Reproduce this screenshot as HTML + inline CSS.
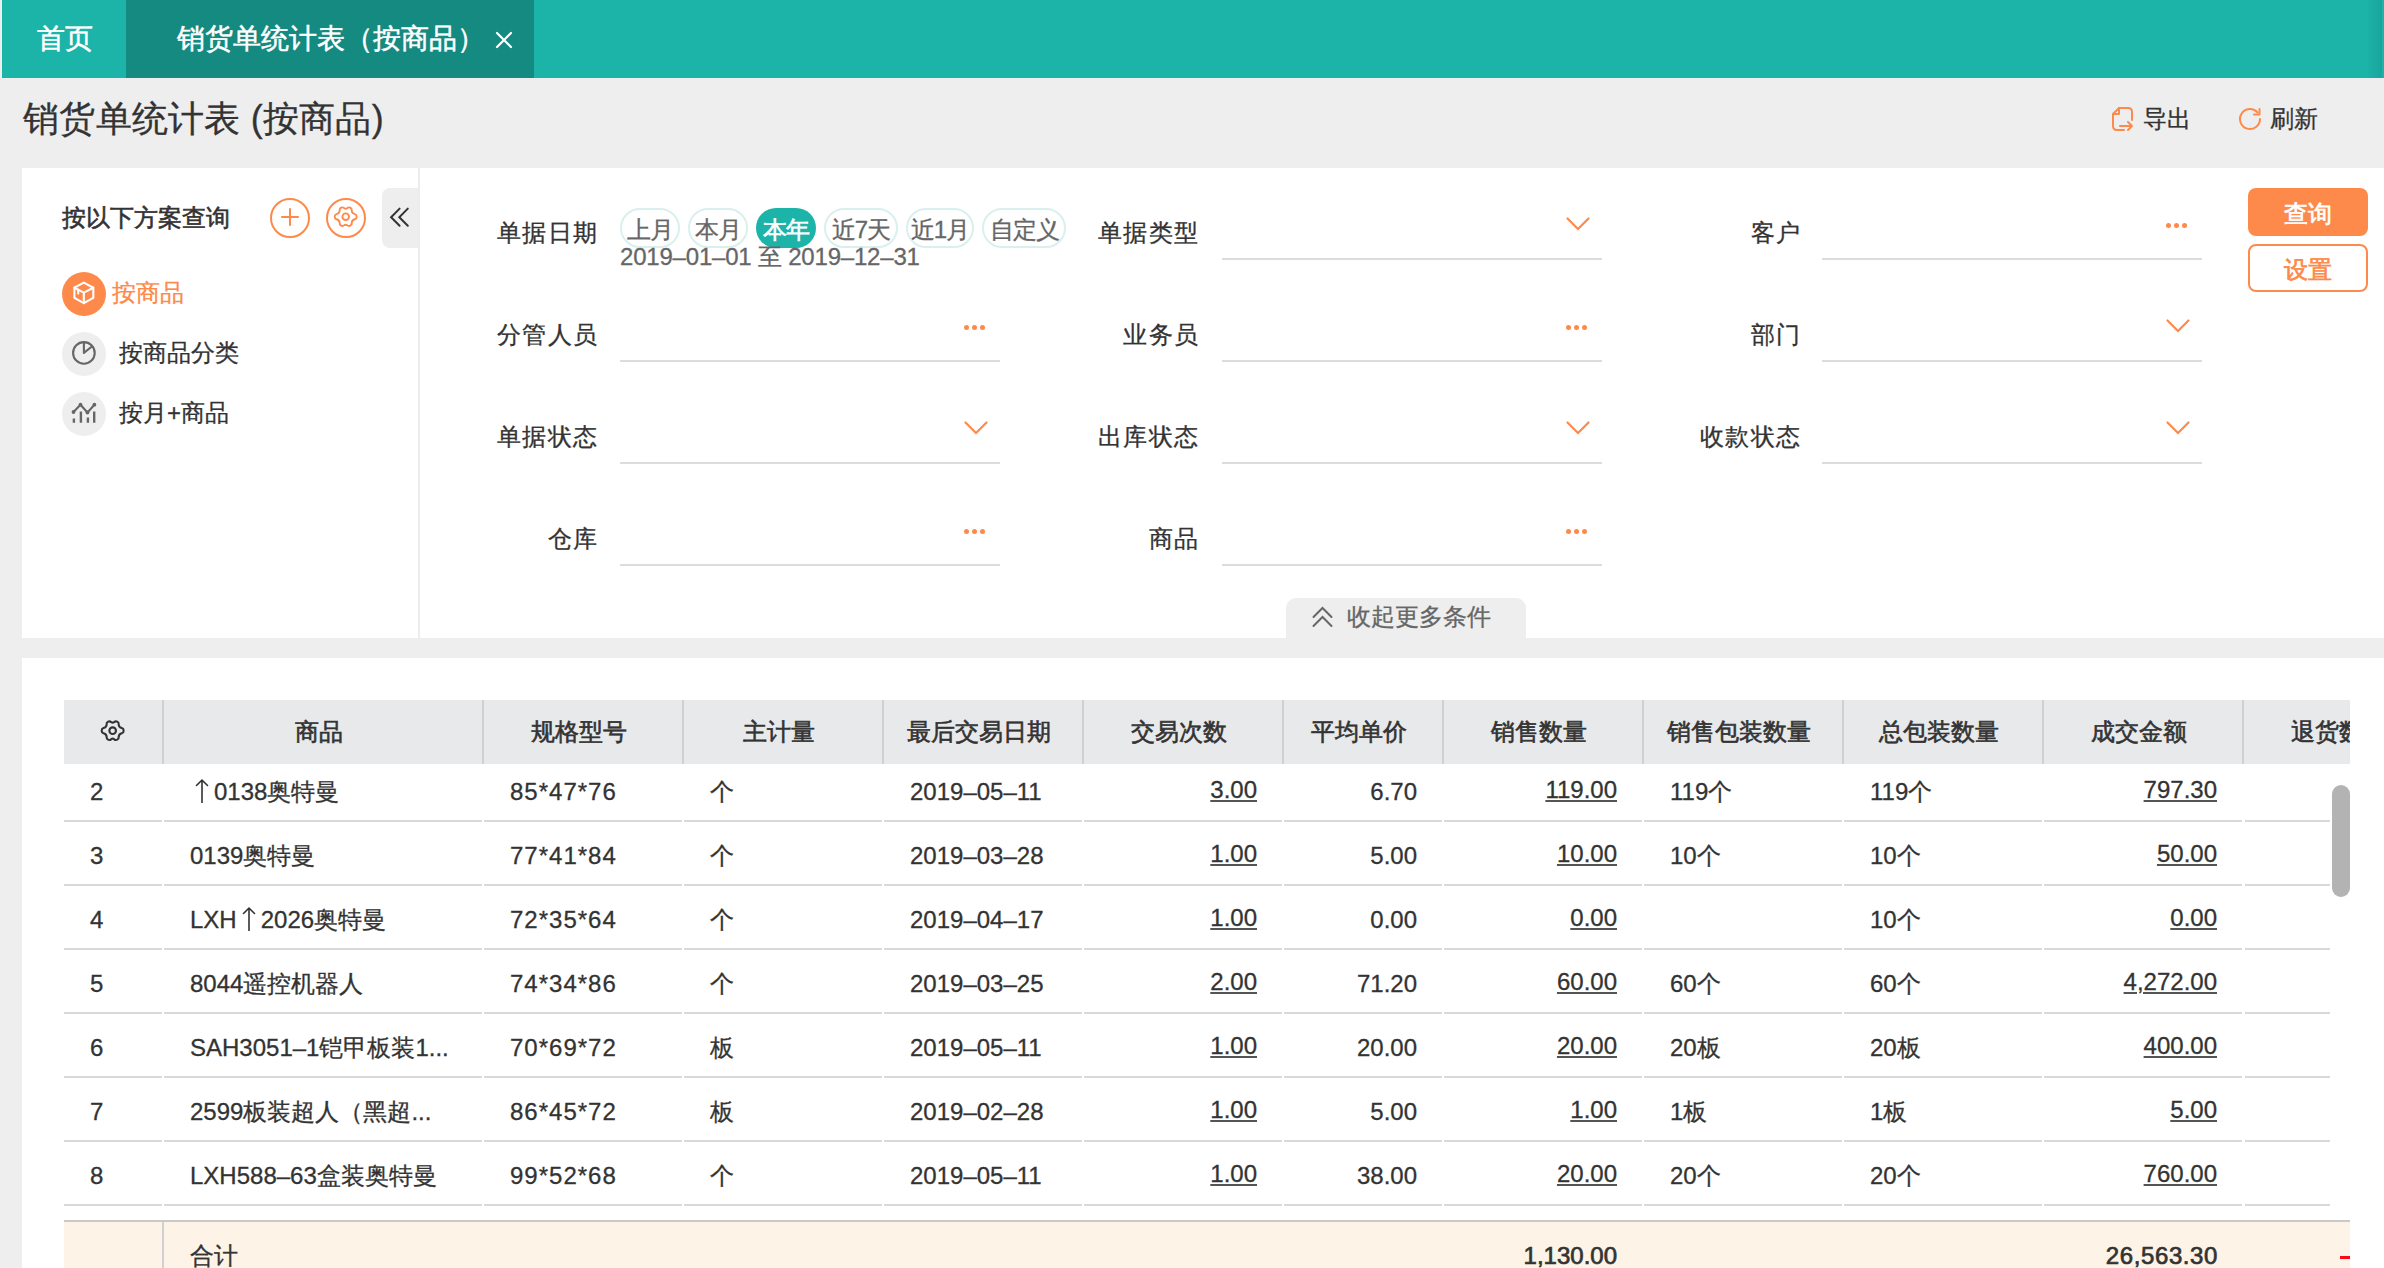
<!DOCTYPE html>
<html><head><meta charset="utf-8">
<style>
*{box-sizing:border-box;margin:0;padding:0}
html,body{width:2384px;height:1268px;overflow:hidden;background:#eeeeee;font-family:"Liberation Sans",sans-serif;color:#333}
.a{position:absolute;white-space:nowrap;-webkit-text-stroke:0.3px currentColor}
svg.a{overflow:visible}
u{text-decoration:underline;text-decoration-thickness:2px;text-underline-offset:2px;text-decoration-color:#555}
</style></head>
<body>

<div class="a" style="left:2px;top:0px;width:2382px;height:78px;background:#1cb3a8;"></div>
<div class="a" style="left:126px;top:0px;width:408px;height:78px;background:#158a81;"></div>
<div class="a" style="left:2366px;top:0px;width:16px;height:78px;background:linear-gradient(to right, rgba(0,0,0,0), rgba(0,0,0,0.08));"></div>
<div class="a" style="left:37px;top:19.0px;font-size:28px;line-height:40px;color:#fff;-webkit-text-stroke:0.5px #fff;">首页</div>
<div class="a" style="left:177px;top:19.0px;font-size:28px;line-height:40px;color:#fff;-webkit-text-stroke:0.5px #fff;">销货单统计表（按商品）</div>
<svg class="a" style="left:496px;top:32px" width="16" height="16" viewBox="0 0 16 16"><path d="M1 1L15 15M15 1L1 15" stroke="#fff" stroke-width="2.2" stroke-linecap="round"/></svg>
<div class="a" style="left:23px;top:96.0px;font-size:36px;line-height:46px;color:#333;letter-spacing:0.25px;">销货单统计表 (按商品)</div>
<svg class="a" style="left:2112px;top:107px" width="22" height="24" viewBox="0 0 22 24" fill="none" stroke="#fd8a4a" stroke-width="2" stroke-linejoin="round" stroke-linecap="round"><path d="M12 23H5Q1 23 1 19V7L7 1H16Q20 1 20 5V13"/><path d="M1 7H7V1"/><path d="M8 19H20M16 15L20 19L16 23"/></svg>
<div class="a" style="left:2143px;top:103.0px;font-size:24px;line-height:32px;color:#333;">导出</div>
<svg class="a" style="left:2238px;top:107px" width="24" height="24" viewBox="0 0 24 24" fill="none" stroke="#fd8a4a" stroke-width="2" stroke-linecap="round" stroke-linejoin="round"><path d="M22 12A10 10 0 1 1 19.5 5.4"/><path d="M21.5 2V7.5H16"/></svg>
<div class="a" style="left:2270px;top:103.0px;font-size:24px;line-height:32px;color:#333;">刷新</div>
<div class="a" style="left:22px;top:168px;width:2362px;height:470px;background:#fff;"></div>
<div class="a" style="left:418px;top:168px;width:2px;height:470px;background:#ececec;"></div>
<div class="a" style="left:62px;top:202.0px;font-size:24px;line-height:32px;color:#333;-webkit-text-stroke:0.6px #333;">按以下方案查询</div>
<svg class="a" style="left:270px;top:198px" width="40" height="40" viewBox="0 0 40 40" fill="none" stroke="#fd8a4a" stroke-width="2"><circle cx="20" cy="20" r="19"/><path d="M11.2 19H28.8M20 10.2V27.8"/></svg>
<svg class="a" style="left:326px;top:198px" width="40" height="40" viewBox="0 0 40 40" fill="none" stroke="#fd8a4a" stroke-width="2"><circle cx="20" cy="20" r="19"/><path d="M28.83 21.27A2.7 2.7 0 0 0 28.83 16.13A4.0 4.0 0 0 1 25.73 12.53A2.7 2.7 0 0 0 21.15 10.20A2.6 2.6 0 0 1 18.25 10.20A2.7 2.7 0 0 0 13.67 12.53A4.0 4.0 0 0 1 10.57 16.13A2.7 2.7 0 0 0 10.57 21.27A4.0 4.0 0 0 1 13.67 24.87A2.7 2.7 0 0 0 18.25 27.20A2.6 2.6 0 0 1 21.15 27.20A2.7 2.7 0 0 0 25.73 24.87A4.0 4.0 0 0 1 28.83 21.27Z" stroke-width="1.9" stroke-linejoin="round"/><circle cx="19.7" cy="18.7" r="3.3" stroke-width="1.9"/></svg>
<div class="a" style="left:382px;top:188px;width:36px;height:60px;background:#eeeeee;border-radius:8px 0 0 8px"></div>
<svg class="a" style="left:389px;top:206px" width="22" height="22" viewBox="0 0 22 22" fill="none" stroke="#333" stroke-width="2" stroke-linecap="round"><path d="M10.6 2.6L2.1 11.2L10.6 19.8M18.8 2.6L10.3 11.2L18.8 19.8"/></svg>
<div class="a" style="left:62px;top:272px;width:44px;height:44px;border-radius:50%;background:#fd8a4a"></div>
<svg class="a" style="left:72px;top:280px" width="24" height="26" viewBox="0 0 24 26" fill="none" stroke="#fff" stroke-width="2.1" stroke-linejoin="round" stroke-linecap="round"><path d="M11.8 2.6L21.3 7.7V17.9L11.8 23.2L2.4 17.9V7.7Z"/><path d="M2.4 7.7L11.8 12.6L21.3 7.7M11.8 12.6V23.2"/><path d="M6.2 9.9V13.6"/></svg>
<div class="a" style="left:112px;top:277.0px;font-size:24px;line-height:32px;color:#fd8a4a;">按商品</div>
<div class="a" style="left:62px;top:332px;width:44px;height:44px;border-radius:50%;background:#eeeeee"></div>
<svg class="a" style="left:62px;top:332px" width="44" height="44" viewBox="0 0 44 44" fill="none" stroke="#666" stroke-width="2.1" stroke-linejoin="round"><circle cx="21.9" cy="20.9" r="10.8"/><path d="M21.9 10.1V20.9L30.2 14.2"/></svg>
<div class="a" style="left:119px;top:337.0px;font-size:24px;line-height:32px;color:#333;">按商品分类</div>
<div class="a" style="left:62px;top:392px;width:44px;height:44px;border-radius:50%;background:#eeeeee"></div>
<svg class="a" style="left:62px;top:392px" width="44" height="44" viewBox="0 0 44 44" fill="none" stroke="#666" stroke-width="2.1" stroke-linejoin="round"><path d="M11.5 20L18.5 12.7L25.45 20.5L32.4 12.7"/><g fill="#666" stroke="none"><circle cx="11.5" cy="20" r="1.9"/><circle cx="18.5" cy="12.7" r="1.9"/><circle cx="25.45" cy="20.5" r="1.9"/><circle cx="32.4" cy="12.7" r="1.9"/></g><path d="M11.9 26.6V30.7M18.9 19.6V30.7M25.9 25.4V30.7M32.2 19.6V30.7" stroke-width="2.4"/></svg>
<div class="a" style="left:119px;top:397.0px;font-size:24px;line-height:32px;color:#333;">按月+商品</div>
<div class="a" style="left:-1.7000000000000455px;top:217.0px;font-size:24px;line-height:32px;color:#333;width:600px;text-align:right;letter-spacing:1.3px;">单据日期</div>
<div class="a" style="left:599.3px;top:217.0px;font-size:24px;line-height:32px;color:#333;width:600px;text-align:right;letter-spacing:1.3px;">单据类型</div>
<div class="a" style="left:1222px;top:258px;width:380px;height:2px;background:#dcdcdc;"></div>
<svg class="a" style="left:1566px;top:217px" width="26" height="14" viewBox="0 0 26 14" fill="none" stroke="#fd8a4a" stroke-width="2.2" stroke-linecap="round"><path d="M1.5 1.5L12 12L22.5 1.5"/></svg>
<div class="a" style="left:1201.3px;top:217.0px;font-size:24px;line-height:32px;color:#333;width:600px;text-align:right;letter-spacing:1.3px;">客户</div>
<div class="a" style="left:1822px;top:258px;width:380px;height:2px;background:#dcdcdc;"></div>
<div class="a" style="left:2165.5px;top:222.5px;width:5px;height:5px;border-radius:50%;background:#fd8a4a"></div>
<div class="a" style="left:2173.5px;top:222.5px;width:5px;height:5px;border-radius:50%;background:#fd8a4a"></div>
<div class="a" style="left:2181.5px;top:222.5px;width:5px;height:5px;border-radius:50%;background:#fd8a4a"></div>
<div class="a" style="left:-1.7000000000000455px;top:319.0px;font-size:24px;line-height:32px;color:#333;width:600px;text-align:right;letter-spacing:1.3px;">分管人员</div>
<div class="a" style="left:620px;top:360px;width:380px;height:2px;background:#dcdcdc;"></div>
<div class="a" style="left:963.5px;top:324.5px;width:5px;height:5px;border-radius:50%;background:#fd8a4a"></div>
<div class="a" style="left:971.5px;top:324.5px;width:5px;height:5px;border-radius:50%;background:#fd8a4a"></div>
<div class="a" style="left:979.5px;top:324.5px;width:5px;height:5px;border-radius:50%;background:#fd8a4a"></div>
<div class="a" style="left:599.3px;top:319.0px;font-size:24px;line-height:32px;color:#333;width:600px;text-align:right;letter-spacing:1.3px;">业务员</div>
<div class="a" style="left:1222px;top:360px;width:380px;height:2px;background:#dcdcdc;"></div>
<div class="a" style="left:1565.5px;top:324.5px;width:5px;height:5px;border-radius:50%;background:#fd8a4a"></div>
<div class="a" style="left:1573.5px;top:324.5px;width:5px;height:5px;border-radius:50%;background:#fd8a4a"></div>
<div class="a" style="left:1581.5px;top:324.5px;width:5px;height:5px;border-radius:50%;background:#fd8a4a"></div>
<div class="a" style="left:1201.3px;top:319.0px;font-size:24px;line-height:32px;color:#333;width:600px;text-align:right;letter-spacing:1.3px;">部门</div>
<div class="a" style="left:1822px;top:360px;width:380px;height:2px;background:#dcdcdc;"></div>
<svg class="a" style="left:2166px;top:319px" width="26" height="14" viewBox="0 0 26 14" fill="none" stroke="#fd8a4a" stroke-width="2.2" stroke-linecap="round"><path d="M1.5 1.5L12 12L22.5 1.5"/></svg>
<div class="a" style="left:-1.7000000000000455px;top:421.0px;font-size:24px;line-height:32px;color:#333;width:600px;text-align:right;letter-spacing:1.3px;">单据状态</div>
<div class="a" style="left:620px;top:462px;width:380px;height:2px;background:#dcdcdc;"></div>
<svg class="a" style="left:964px;top:421px" width="26" height="14" viewBox="0 0 26 14" fill="none" stroke="#fd8a4a" stroke-width="2.2" stroke-linecap="round"><path d="M1.5 1.5L12 12L22.5 1.5"/></svg>
<div class="a" style="left:599.3px;top:421.0px;font-size:24px;line-height:32px;color:#333;width:600px;text-align:right;letter-spacing:1.3px;">出库状态</div>
<div class="a" style="left:1222px;top:462px;width:380px;height:2px;background:#dcdcdc;"></div>
<svg class="a" style="left:1566px;top:421px" width="26" height="14" viewBox="0 0 26 14" fill="none" stroke="#fd8a4a" stroke-width="2.2" stroke-linecap="round"><path d="M1.5 1.5L12 12L22.5 1.5"/></svg>
<div class="a" style="left:1201.3px;top:421.0px;font-size:24px;line-height:32px;color:#333;width:600px;text-align:right;letter-spacing:1.3px;">收款状态</div>
<div class="a" style="left:1822px;top:462px;width:380px;height:2px;background:#dcdcdc;"></div>
<svg class="a" style="left:2166px;top:421px" width="26" height="14" viewBox="0 0 26 14" fill="none" stroke="#fd8a4a" stroke-width="2.2" stroke-linecap="round"><path d="M1.5 1.5L12 12L22.5 1.5"/></svg>
<div class="a" style="left:-1.7000000000000455px;top:523.0px;font-size:24px;line-height:32px;color:#333;width:600px;text-align:right;letter-spacing:1.3px;">仓库</div>
<div class="a" style="left:620px;top:564px;width:380px;height:2px;background:#dcdcdc;"></div>
<div class="a" style="left:963.5px;top:528.5px;width:5px;height:5px;border-radius:50%;background:#fd8a4a"></div>
<div class="a" style="left:971.5px;top:528.5px;width:5px;height:5px;border-radius:50%;background:#fd8a4a"></div>
<div class="a" style="left:979.5px;top:528.5px;width:5px;height:5px;border-radius:50%;background:#fd8a4a"></div>
<div class="a" style="left:599.3px;top:523.0px;font-size:24px;line-height:32px;color:#333;width:600px;text-align:right;letter-spacing:1.3px;">商品</div>
<div class="a" style="left:1222px;top:564px;width:380px;height:2px;background:#dcdcdc;"></div>
<div class="a" style="left:1565.5px;top:528.5px;width:5px;height:5px;border-radius:50%;background:#fd8a4a"></div>
<div class="a" style="left:1573.5px;top:528.5px;width:5px;height:5px;border-radius:50%;background:#fd8a4a"></div>
<div class="a" style="left:1581.5px;top:528.5px;width:5px;height:5px;border-radius:50%;background:#fd8a4a"></div>
<div class="a" style="left:620px;top:208px;width:60px;height:40px;border-radius:20px;border:2px solid #d9f0ee;color:#666;font-size:24px;line-height:39px;text-align:center;letter-spacing:-1px">上月</div>
<div class="a" style="left:688px;top:208px;width:60px;height:40px;border-radius:20px;border:2px solid #d9f0ee;color:#666;font-size:24px;line-height:39px;text-align:center;letter-spacing:-1px">本月</div>
<div class="a" style="left:756px;top:208px;width:60px;height:40px;border-radius:20px;background:#1cb3a8;color:#fff;-webkit-text-stroke:0.6px #fff;font-size:24px;line-height:43px;text-align:center;letter-spacing:-1px">本年</div>
<div class="a" style="left:824px;top:208px;width:74px;height:40px;border-radius:20px;border:2px solid #d9f0ee;color:#666;font-size:24px;line-height:39px;text-align:center;letter-spacing:-1px">近7天</div>
<div class="a" style="left:906px;top:208px;width:68px;height:40px;border-radius:20px;border:2px solid #d9f0ee;color:#666;font-size:24px;line-height:39px;text-align:center;letter-spacing:-1px">近1月</div>
<div class="a" style="left:982px;top:208px;width:84px;height:40px;border-radius:20px;border:2px solid #d9f0ee;color:#666;font-size:24px;line-height:39px;text-align:center;letter-spacing:-1px">自定义</div>
<div class="a" style="left:620px;top:242.0px;font-size:24px;line-height:30px;color:#666;letter-spacing:-0.2px;">2019–01–01 至 2019–12–31</div>
<div class="a" style="left:2248px;top:188px;width:120px;height:48px;border-radius:8px;background:#fd8a4a;color:#fff;font-size:24px;-webkit-text-stroke:0.7px #fff;line-height:51px;text-align:center">查询</div>
<div class="a" style="left:2248px;top:244px;width:120px;height:48px;border-radius:8px;border:2px solid #fd8a4a;color:#fd8a4a;font-size:24px;-webkit-text-stroke:0.7px #fd8a4a;line-height:47px;text-align:center">设置</div>
<div class="a" style="left:1286px;top:598px;width:240px;height:41px;background:#eeeeee;border-radius:10px 10px 0 0"></div>
<svg class="a" style="left:1312px;top:607px" width="21" height="21" viewBox="0 0 21 21" fill="none" stroke="#666" stroke-width="2" stroke-linecap="round"><path d="M1.5 10L10.5 1L19.5 10M1.5 19L10.5 10L19.5 19"/></svg>
<div class="a" style="left:1347px;top:601.0px;font-size:24px;line-height:32px;color:#666;">收起更多条件</div>
<div class="a" style="left:22px;top:658px;width:2362px;height:610px;background:#fff;"></div>
<div class="a" style="left:64px;top:700px;width:2286px;height:64px;background:#e8e9eb;"></div>
<div class="a" style="left:162px;top:700px;width:2px;height:64px;background:#cfd0d2;"></div>
<div class="a" style="left:482px;top:700px;width:2px;height:64px;background:#cfd0d2;"></div>
<div class="a" style="left:682px;top:700px;width:2px;height:64px;background:#cfd0d2;"></div>
<div class="a" style="left:882px;top:700px;width:2px;height:64px;background:#cfd0d2;"></div>
<div class="a" style="left:1082px;top:700px;width:2px;height:64px;background:#cfd0d2;"></div>
<div class="a" style="left:1282px;top:700px;width:2px;height:64px;background:#cfd0d2;"></div>
<div class="a" style="left:1442px;top:700px;width:2px;height:64px;background:#cfd0d2;"></div>
<div class="a" style="left:1642px;top:700px;width:2px;height:64px;background:#cfd0d2;"></div>
<div class="a" style="left:1842px;top:700px;width:2px;height:64px;background:#cfd0d2;"></div>
<div class="a" style="left:2042px;top:700px;width:2px;height:64px;background:#cfd0d2;"></div>
<div class="a" style="left:2242px;top:700px;width:2px;height:64px;background:#cfd0d2;"></div>
<svg class="a" style="left:97px;top:715px" width="32" height="32" viewBox="0 0 32 32" fill="none" stroke="#333" stroke-width="2.1" stroke-linejoin="round"><path d="M24.79 18.23A2.7 2.7 0 0 0 24.79 13.09A4.0 4.0 0 0 1 21.69 9.49A2.7 2.7 0 0 0 17.11 7.16A2.6 2.6 0 0 1 14.21 7.16A2.7 2.7 0 0 0 9.63 9.49A4.0 4.0 0 0 1 6.53 13.09A2.7 2.7 0 0 0 6.53 18.23A4.0 4.0 0 0 1 9.63 21.83A2.7 2.7 0 0 0 14.21 24.16A2.6 2.6 0 0 1 17.11 24.16A2.7 2.7 0 0 0 21.69 21.83A4.0 4.0 0 0 1 24.79 18.23Z"/><circle cx="15.66" cy="15.66" r="3.3"/></svg>
<div class="a" style="left:0;top:700px;width:2350px;height:64px;overflow:hidden">
<div class="a" style="left:169.0px;top:16px;width:300px;font-size:24px;line-height:32px;-webkit-text-stroke:0.6px #333;text-align:center;color:#333">商品</div>
<div class="a" style="left:429.0px;top:16px;width:300px;font-size:24px;line-height:32px;-webkit-text-stroke:0.6px #333;text-align:center;color:#333">规格型号</div>
<div class="a" style="left:629.0px;top:16px;width:300px;font-size:24px;line-height:32px;-webkit-text-stroke:0.6px #333;text-align:center;color:#333">主计量</div>
<div class="a" style="left:829.0px;top:16px;width:300px;font-size:24px;line-height:32px;-webkit-text-stroke:0.6px #333;text-align:center;color:#333">最后交易日期</div>
<div class="a" style="left:1029.0px;top:16px;width:300px;font-size:24px;line-height:32px;-webkit-text-stroke:0.6px #333;text-align:center;color:#333">交易次数</div>
<div class="a" style="left:1209.0px;top:16px;width:300px;font-size:24px;line-height:32px;-webkit-text-stroke:0.6px #333;text-align:center;color:#333">平均单价</div>
<div class="a" style="left:1389.0px;top:16px;width:300px;font-size:24px;line-height:32px;-webkit-text-stroke:0.6px #333;text-align:center;color:#333">销售数量</div>
<div class="a" style="left:1589.0px;top:16px;width:300px;font-size:24px;line-height:32px;-webkit-text-stroke:0.6px #333;text-align:center;color:#333">销售包装数量</div>
<div class="a" style="left:1789.0px;top:16px;width:300px;font-size:24px;line-height:32px;-webkit-text-stroke:0.6px #333;text-align:center;color:#333">总包装数量</div>
<div class="a" style="left:1989.0px;top:16px;width:300px;font-size:24px;line-height:32px;-webkit-text-stroke:0.6px #333;text-align:center;color:#333">成交金额</div>
<div class="a" style="left:2189.0px;top:16px;width:300px;font-size:24px;line-height:32px;-webkit-text-stroke:0.6px #333;text-align:center;color:#333">退货数量</div>
</div>
<div class="a" style="left:64px;top:820px;width:98px;height:2px;background:#d9d9d9;"></div>
<div class="a" style="left:164px;top:820px;width:318px;height:2px;background:#d9d9d9;"></div>
<div class="a" style="left:484px;top:820px;width:198px;height:2px;background:#d9d9d9;"></div>
<div class="a" style="left:684px;top:820px;width:198px;height:2px;background:#d9d9d9;"></div>
<div class="a" style="left:884px;top:820px;width:198px;height:2px;background:#d9d9d9;"></div>
<div class="a" style="left:1084px;top:820px;width:198px;height:2px;background:#d9d9d9;"></div>
<div class="a" style="left:1284px;top:820px;width:158px;height:2px;background:#d9d9d9;"></div>
<div class="a" style="left:1444px;top:820px;width:198px;height:2px;background:#d9d9d9;"></div>
<div class="a" style="left:1644px;top:820px;width:198px;height:2px;background:#d9d9d9;"></div>
<div class="a" style="left:1844px;top:820px;width:198px;height:2px;background:#d9d9d9;"></div>
<div class="a" style="left:2044px;top:820px;width:198px;height:2px;background:#d9d9d9;"></div>
<div class="a" style="left:2245px;top:820px;width:85px;height:2px;background:#d9d9d9;"></div>
<div class="a" style="left:90px;top:776.0px;font-size:24px;line-height:32px;color:#333;">2</div>
<div class="a" style="left:190px;top:776.0px;font-size:24px;line-height:32px;color:#333;"><svg width="24" height="24" viewBox="0 0 24 24" style="vertical-align:-3px" fill="none" stroke="#333" stroke-width="1.6" stroke-linecap="round" stroke-linejoin="round"><path d="M12 1V24M6.5 6.5L12 1L17.5 6.5"/></svg>0138奥特曼</div>
<div class="a" style="left:510px;top:776.0px;font-size:24px;line-height:32px;color:#333;letter-spacing:1px;">85*47*76</div>
<div class="a" style="left:710px;top:776.0px;font-size:24px;line-height:32px;color:#333;">个</div>
<div class="a" style="left:910px;top:776.0px;font-size:24px;line-height:32px;color:#333;">2019–05–11</div>
<div class="a" style="left:1670px;top:776.0px;font-size:24px;line-height:32px;color:#333;">119个</div>
<div class="a" style="left:1870px;top:776.0px;font-size:24px;line-height:32px;color:#333;">119个</div>
<div class="a" style="left:657px;top:774.0px;font-size:24px;line-height:32px;color:#333;width:600px;text-align:right;"><u>3.00</u></div>
<div class="a" style="left:1017px;top:774.0px;font-size:24px;line-height:32px;color:#333;width:600px;text-align:right;"><u>119.00</u></div>
<div class="a" style="left:1617px;top:774.0px;font-size:24px;line-height:32px;color:#333;width:600px;text-align:right;"><u>797.30</u></div>
<div class="a" style="left:817px;top:776.0px;font-size:24px;line-height:32px;color:#333;width:600px;text-align:right;">6.70</div>
<div class="a" style="left:64px;top:884px;width:98px;height:2px;background:#d9d9d9;"></div>
<div class="a" style="left:164px;top:884px;width:318px;height:2px;background:#d9d9d9;"></div>
<div class="a" style="left:484px;top:884px;width:198px;height:2px;background:#d9d9d9;"></div>
<div class="a" style="left:684px;top:884px;width:198px;height:2px;background:#d9d9d9;"></div>
<div class="a" style="left:884px;top:884px;width:198px;height:2px;background:#d9d9d9;"></div>
<div class="a" style="left:1084px;top:884px;width:198px;height:2px;background:#d9d9d9;"></div>
<div class="a" style="left:1284px;top:884px;width:158px;height:2px;background:#d9d9d9;"></div>
<div class="a" style="left:1444px;top:884px;width:198px;height:2px;background:#d9d9d9;"></div>
<div class="a" style="left:1644px;top:884px;width:198px;height:2px;background:#d9d9d9;"></div>
<div class="a" style="left:1844px;top:884px;width:198px;height:2px;background:#d9d9d9;"></div>
<div class="a" style="left:2044px;top:884px;width:198px;height:2px;background:#d9d9d9;"></div>
<div class="a" style="left:2245px;top:884px;width:85px;height:2px;background:#d9d9d9;"></div>
<div class="a" style="left:90px;top:840.0px;font-size:24px;line-height:32px;color:#333;">3</div>
<div class="a" style="left:190px;top:840.0px;font-size:24px;line-height:32px;color:#333;">0139奥特曼</div>
<div class="a" style="left:510px;top:840.0px;font-size:24px;line-height:32px;color:#333;letter-spacing:1px;">77*41*84</div>
<div class="a" style="left:710px;top:840.0px;font-size:24px;line-height:32px;color:#333;">个</div>
<div class="a" style="left:910px;top:840.0px;font-size:24px;line-height:32px;color:#333;">2019–03–28</div>
<div class="a" style="left:1670px;top:840.0px;font-size:24px;line-height:32px;color:#333;">10个</div>
<div class="a" style="left:1870px;top:840.0px;font-size:24px;line-height:32px;color:#333;">10个</div>
<div class="a" style="left:657px;top:838.0px;font-size:24px;line-height:32px;color:#333;width:600px;text-align:right;"><u>1.00</u></div>
<div class="a" style="left:1017px;top:838.0px;font-size:24px;line-height:32px;color:#333;width:600px;text-align:right;"><u>10.00</u></div>
<div class="a" style="left:1617px;top:838.0px;font-size:24px;line-height:32px;color:#333;width:600px;text-align:right;"><u>50.00</u></div>
<div class="a" style="left:817px;top:840.0px;font-size:24px;line-height:32px;color:#333;width:600px;text-align:right;">5.00</div>
<div class="a" style="left:64px;top:948px;width:98px;height:2px;background:#d9d9d9;"></div>
<div class="a" style="left:164px;top:948px;width:318px;height:2px;background:#d9d9d9;"></div>
<div class="a" style="left:484px;top:948px;width:198px;height:2px;background:#d9d9d9;"></div>
<div class="a" style="left:684px;top:948px;width:198px;height:2px;background:#d9d9d9;"></div>
<div class="a" style="left:884px;top:948px;width:198px;height:2px;background:#d9d9d9;"></div>
<div class="a" style="left:1084px;top:948px;width:198px;height:2px;background:#d9d9d9;"></div>
<div class="a" style="left:1284px;top:948px;width:158px;height:2px;background:#d9d9d9;"></div>
<div class="a" style="left:1444px;top:948px;width:198px;height:2px;background:#d9d9d9;"></div>
<div class="a" style="left:1644px;top:948px;width:198px;height:2px;background:#d9d9d9;"></div>
<div class="a" style="left:1844px;top:948px;width:198px;height:2px;background:#d9d9d9;"></div>
<div class="a" style="left:2044px;top:948px;width:198px;height:2px;background:#d9d9d9;"></div>
<div class="a" style="left:2245px;top:948px;width:85px;height:2px;background:#d9d9d9;"></div>
<div class="a" style="left:90px;top:904.0px;font-size:24px;line-height:32px;color:#333;">4</div>
<div class="a" style="left:190px;top:904.0px;font-size:24px;line-height:32px;color:#333;">LXH<svg width="24" height="24" viewBox="0 0 24 24" style="vertical-align:-3px" fill="none" stroke="#333" stroke-width="1.6" stroke-linecap="round" stroke-linejoin="round"><path d="M12 1V24M6.5 6.5L12 1L17.5 6.5"/></svg>2026奥特曼</div>
<div class="a" style="left:510px;top:904.0px;font-size:24px;line-height:32px;color:#333;letter-spacing:1px;">72*35*64</div>
<div class="a" style="left:710px;top:904.0px;font-size:24px;line-height:32px;color:#333;">个</div>
<div class="a" style="left:910px;top:904.0px;font-size:24px;line-height:32px;color:#333;">2019–04–17</div>
<div class="a" style="left:1670px;top:904.0px;font-size:24px;line-height:32px;color:#333;"></div>
<div class="a" style="left:1870px;top:904.0px;font-size:24px;line-height:32px;color:#333;">10个</div>
<div class="a" style="left:657px;top:902.0px;font-size:24px;line-height:32px;color:#333;width:600px;text-align:right;"><u>1.00</u></div>
<div class="a" style="left:1017px;top:902.0px;font-size:24px;line-height:32px;color:#333;width:600px;text-align:right;"><u>0.00</u></div>
<div class="a" style="left:1617px;top:902.0px;font-size:24px;line-height:32px;color:#333;width:600px;text-align:right;"><u>0.00</u></div>
<div class="a" style="left:817px;top:904.0px;font-size:24px;line-height:32px;color:#333;width:600px;text-align:right;">0.00</div>
<div class="a" style="left:64px;top:1012px;width:98px;height:2px;background:#d9d9d9;"></div>
<div class="a" style="left:164px;top:1012px;width:318px;height:2px;background:#d9d9d9;"></div>
<div class="a" style="left:484px;top:1012px;width:198px;height:2px;background:#d9d9d9;"></div>
<div class="a" style="left:684px;top:1012px;width:198px;height:2px;background:#d9d9d9;"></div>
<div class="a" style="left:884px;top:1012px;width:198px;height:2px;background:#d9d9d9;"></div>
<div class="a" style="left:1084px;top:1012px;width:198px;height:2px;background:#d9d9d9;"></div>
<div class="a" style="left:1284px;top:1012px;width:158px;height:2px;background:#d9d9d9;"></div>
<div class="a" style="left:1444px;top:1012px;width:198px;height:2px;background:#d9d9d9;"></div>
<div class="a" style="left:1644px;top:1012px;width:198px;height:2px;background:#d9d9d9;"></div>
<div class="a" style="left:1844px;top:1012px;width:198px;height:2px;background:#d9d9d9;"></div>
<div class="a" style="left:2044px;top:1012px;width:198px;height:2px;background:#d9d9d9;"></div>
<div class="a" style="left:2245px;top:1012px;width:85px;height:2px;background:#d9d9d9;"></div>
<div class="a" style="left:90px;top:968.0px;font-size:24px;line-height:32px;color:#333;">5</div>
<div class="a" style="left:190px;top:968.0px;font-size:24px;line-height:32px;color:#333;">8044遥控机器人</div>
<div class="a" style="left:510px;top:968.0px;font-size:24px;line-height:32px;color:#333;letter-spacing:1px;">74*34*86</div>
<div class="a" style="left:710px;top:968.0px;font-size:24px;line-height:32px;color:#333;">个</div>
<div class="a" style="left:910px;top:968.0px;font-size:24px;line-height:32px;color:#333;">2019–03–25</div>
<div class="a" style="left:1670px;top:968.0px;font-size:24px;line-height:32px;color:#333;">60个</div>
<div class="a" style="left:1870px;top:968.0px;font-size:24px;line-height:32px;color:#333;">60个</div>
<div class="a" style="left:657px;top:966.0px;font-size:24px;line-height:32px;color:#333;width:600px;text-align:right;"><u>2.00</u></div>
<div class="a" style="left:1017px;top:966.0px;font-size:24px;line-height:32px;color:#333;width:600px;text-align:right;"><u>60.00</u></div>
<div class="a" style="left:1617px;top:966.0px;font-size:24px;line-height:32px;color:#333;width:600px;text-align:right;"><u>4,272.00</u></div>
<div class="a" style="left:817px;top:968.0px;font-size:24px;line-height:32px;color:#333;width:600px;text-align:right;">71.20</div>
<div class="a" style="left:64px;top:1076px;width:98px;height:2px;background:#d9d9d9;"></div>
<div class="a" style="left:164px;top:1076px;width:318px;height:2px;background:#d9d9d9;"></div>
<div class="a" style="left:484px;top:1076px;width:198px;height:2px;background:#d9d9d9;"></div>
<div class="a" style="left:684px;top:1076px;width:198px;height:2px;background:#d9d9d9;"></div>
<div class="a" style="left:884px;top:1076px;width:198px;height:2px;background:#d9d9d9;"></div>
<div class="a" style="left:1084px;top:1076px;width:198px;height:2px;background:#d9d9d9;"></div>
<div class="a" style="left:1284px;top:1076px;width:158px;height:2px;background:#d9d9d9;"></div>
<div class="a" style="left:1444px;top:1076px;width:198px;height:2px;background:#d9d9d9;"></div>
<div class="a" style="left:1644px;top:1076px;width:198px;height:2px;background:#d9d9d9;"></div>
<div class="a" style="left:1844px;top:1076px;width:198px;height:2px;background:#d9d9d9;"></div>
<div class="a" style="left:2044px;top:1076px;width:198px;height:2px;background:#d9d9d9;"></div>
<div class="a" style="left:2245px;top:1076px;width:85px;height:2px;background:#d9d9d9;"></div>
<div class="a" style="left:90px;top:1032.0px;font-size:24px;line-height:32px;color:#333;">6</div>
<div class="a" style="left:190px;top:1032.0px;font-size:24px;line-height:32px;color:#333;">SAH3051–1铠甲板装1...</div>
<div class="a" style="left:510px;top:1032.0px;font-size:24px;line-height:32px;color:#333;letter-spacing:1px;">70*69*72</div>
<div class="a" style="left:710px;top:1032.0px;font-size:24px;line-height:32px;color:#333;">板</div>
<div class="a" style="left:910px;top:1032.0px;font-size:24px;line-height:32px;color:#333;">2019–05–11</div>
<div class="a" style="left:1670px;top:1032.0px;font-size:24px;line-height:32px;color:#333;">20板</div>
<div class="a" style="left:1870px;top:1032.0px;font-size:24px;line-height:32px;color:#333;">20板</div>
<div class="a" style="left:657px;top:1030.0px;font-size:24px;line-height:32px;color:#333;width:600px;text-align:right;"><u>1.00</u></div>
<div class="a" style="left:1017px;top:1030.0px;font-size:24px;line-height:32px;color:#333;width:600px;text-align:right;"><u>20.00</u></div>
<div class="a" style="left:1617px;top:1030.0px;font-size:24px;line-height:32px;color:#333;width:600px;text-align:right;"><u>400.00</u></div>
<div class="a" style="left:817px;top:1032.0px;font-size:24px;line-height:32px;color:#333;width:600px;text-align:right;">20.00</div>
<div class="a" style="left:64px;top:1140px;width:98px;height:2px;background:#d9d9d9;"></div>
<div class="a" style="left:164px;top:1140px;width:318px;height:2px;background:#d9d9d9;"></div>
<div class="a" style="left:484px;top:1140px;width:198px;height:2px;background:#d9d9d9;"></div>
<div class="a" style="left:684px;top:1140px;width:198px;height:2px;background:#d9d9d9;"></div>
<div class="a" style="left:884px;top:1140px;width:198px;height:2px;background:#d9d9d9;"></div>
<div class="a" style="left:1084px;top:1140px;width:198px;height:2px;background:#d9d9d9;"></div>
<div class="a" style="left:1284px;top:1140px;width:158px;height:2px;background:#d9d9d9;"></div>
<div class="a" style="left:1444px;top:1140px;width:198px;height:2px;background:#d9d9d9;"></div>
<div class="a" style="left:1644px;top:1140px;width:198px;height:2px;background:#d9d9d9;"></div>
<div class="a" style="left:1844px;top:1140px;width:198px;height:2px;background:#d9d9d9;"></div>
<div class="a" style="left:2044px;top:1140px;width:198px;height:2px;background:#d9d9d9;"></div>
<div class="a" style="left:2245px;top:1140px;width:85px;height:2px;background:#d9d9d9;"></div>
<div class="a" style="left:90px;top:1096.0px;font-size:24px;line-height:32px;color:#333;">7</div>
<div class="a" style="left:190px;top:1096.0px;font-size:24px;line-height:32px;color:#333;">2599板装超人（黑超...</div>
<div class="a" style="left:510px;top:1096.0px;font-size:24px;line-height:32px;color:#333;letter-spacing:1px;">86*45*72</div>
<div class="a" style="left:710px;top:1096.0px;font-size:24px;line-height:32px;color:#333;">板</div>
<div class="a" style="left:910px;top:1096.0px;font-size:24px;line-height:32px;color:#333;">2019–02–28</div>
<div class="a" style="left:1670px;top:1096.0px;font-size:24px;line-height:32px;color:#333;">1板</div>
<div class="a" style="left:1870px;top:1096.0px;font-size:24px;line-height:32px;color:#333;">1板</div>
<div class="a" style="left:657px;top:1094.0px;font-size:24px;line-height:32px;color:#333;width:600px;text-align:right;"><u>1.00</u></div>
<div class="a" style="left:1017px;top:1094.0px;font-size:24px;line-height:32px;color:#333;width:600px;text-align:right;"><u>1.00</u></div>
<div class="a" style="left:1617px;top:1094.0px;font-size:24px;line-height:32px;color:#333;width:600px;text-align:right;"><u>5.00</u></div>
<div class="a" style="left:817px;top:1096.0px;font-size:24px;line-height:32px;color:#333;width:600px;text-align:right;">5.00</div>
<div class="a" style="left:64px;top:1204px;width:98px;height:2px;background:#d9d9d9;"></div>
<div class="a" style="left:164px;top:1204px;width:318px;height:2px;background:#d9d9d9;"></div>
<div class="a" style="left:484px;top:1204px;width:198px;height:2px;background:#d9d9d9;"></div>
<div class="a" style="left:684px;top:1204px;width:198px;height:2px;background:#d9d9d9;"></div>
<div class="a" style="left:884px;top:1204px;width:198px;height:2px;background:#d9d9d9;"></div>
<div class="a" style="left:1084px;top:1204px;width:198px;height:2px;background:#d9d9d9;"></div>
<div class="a" style="left:1284px;top:1204px;width:158px;height:2px;background:#d9d9d9;"></div>
<div class="a" style="left:1444px;top:1204px;width:198px;height:2px;background:#d9d9d9;"></div>
<div class="a" style="left:1644px;top:1204px;width:198px;height:2px;background:#d9d9d9;"></div>
<div class="a" style="left:1844px;top:1204px;width:198px;height:2px;background:#d9d9d9;"></div>
<div class="a" style="left:2044px;top:1204px;width:198px;height:2px;background:#d9d9d9;"></div>
<div class="a" style="left:2245px;top:1204px;width:85px;height:2px;background:#d9d9d9;"></div>
<div class="a" style="left:90px;top:1160.0px;font-size:24px;line-height:32px;color:#333;">8</div>
<div class="a" style="left:190px;top:1160.0px;font-size:24px;line-height:32px;color:#333;">LXH588–63盒装奥特曼</div>
<div class="a" style="left:510px;top:1160.0px;font-size:24px;line-height:32px;color:#333;letter-spacing:1px;">99*52*68</div>
<div class="a" style="left:710px;top:1160.0px;font-size:24px;line-height:32px;color:#333;">个</div>
<div class="a" style="left:910px;top:1160.0px;font-size:24px;line-height:32px;color:#333;">2019–05–11</div>
<div class="a" style="left:1670px;top:1160.0px;font-size:24px;line-height:32px;color:#333;">20个</div>
<div class="a" style="left:1870px;top:1160.0px;font-size:24px;line-height:32px;color:#333;">20个</div>
<div class="a" style="left:657px;top:1158.0px;font-size:24px;line-height:32px;color:#333;width:600px;text-align:right;"><u>1.00</u></div>
<div class="a" style="left:1017px;top:1158.0px;font-size:24px;line-height:32px;color:#333;width:600px;text-align:right;"><u>20.00</u></div>
<div class="a" style="left:1617px;top:1158.0px;font-size:24px;line-height:32px;color:#333;width:600px;text-align:right;"><u>760.00</u></div>
<div class="a" style="left:817px;top:1160.0px;font-size:24px;line-height:32px;color:#333;width:600px;text-align:right;">38.00</div>
<div class="a" style="left:64px;top:1220px;width:2286px;height:48px;background:#fdf3e6;"></div>
<div class="a" style="left:64px;top:1220px;width:2286px;height:2px;background:#c9c9c9;"></div>
<div class="a" style="left:162px;top:1222px;width:2px;height:46px;background:#cfd0d2;"></div>
<div class="a" style="left:190px;top:1240.0px;font-size:24px;line-height:32px;color:#333;">合计</div>
<div class="a" style="left:1017px;top:1240.0px;font-size:24px;line-height:32px;color:#333;width:600px;text-align:right;-webkit-text-stroke:0.7px #333;">1,130.00</div>
<div class="a" style="left:1618px;top:1240.0px;font-size:24px;line-height:32px;color:#333;width:600px;text-align:right;-webkit-text-stroke:0.7px #333;letter-spacing:0.6px;">26,563.30</div>
<div class="a" style="left:2340px;top:1256px;width:10px;height:3px;background:#fa0a14;"></div>
<div class="a" style="left:2332px;top:785px;width:18px;height:112px;background:#b3b3b3;border-radius:9px"></div>
</body></html>
